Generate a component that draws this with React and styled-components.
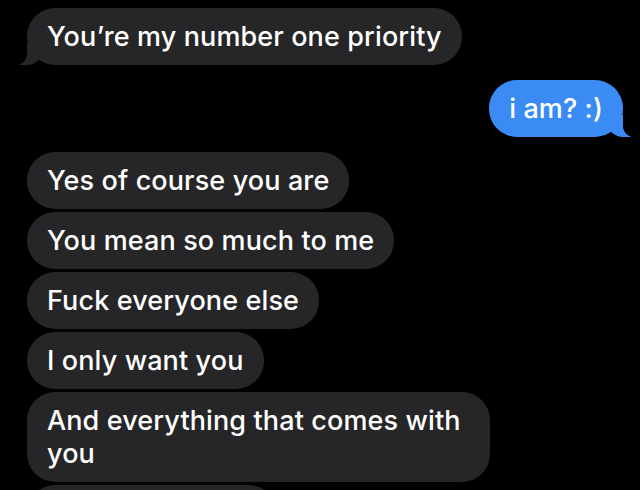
// iMessage-style conversation thread, dark mode
import React from 'react';
import styled, { createGlobalStyle } from 'styled-components';

const GlobalStyle = createGlobalStyle`
	html, body {
		margin: 0;
		padding: 0;
		background: #000000;
		overflow: hidden;
	}
	body {
		font-family: Inter, "Noto Sans", "Liberation Sans", sans-serif;
		-webkit-font-smoothing: antialiased;
	}
`;

// the whole thread
const Thread = styled.div`
	width: 640px;
	height: 490px;
	box-sizing: border-box;
	padding: 8px 17px 0 27px;
	display: flex;
	flex-direction: column;
	overflow: hidden;
`;

// a run of messages from the same sender
const Group = styled.div`
	display: flex;
	flex-direction: column;
	align-items: ${({ $mine }) => ($mine ? 'flex-end' : 'flex-start')};
	gap: 3px;
	margin-bottom: 15px;
`;

const bubbleColor = ({ $mine }) => ($mine ? '#3a8cf4' : '#262628');

// a single message bubble, with an optional tail at the bottom corner
const Bubble = styled.div`
	position: relative;
	max-width: 423px;
	padding: 12px 20px;
	border-radius: 28px;
	background: ${bubbleColor};
	color: #ffffff;
	font-size: 27px;
	line-height: 33px;
	letter-spacing: 0.12px;
	font-weight: 500;

	${({ $tail, $mine }) =>
		$tail &&
		`
		&::before {
			content: '';
			position: absolute;
			bottom: 0;
			${$mine ? 'right: -8px;' : 'left: -8px;'}
			width: 24px;
			height: 22px;
			background: ${$mine ? '#3a8cf4' : '#262628'};
			${$mine ? 'border-bottom-left-radius: 16px;' : 'border-bottom-right-radius: 16px;'}
		}
		&::after {
			content: '';
			position: absolute;
			bottom: 0;
			${$mine ? 'right: -12px;' : 'left: -12px;'}
			width: 12px;
			height: 24px;
			background: #000000;
			${$mine ? 'border-bottom-left-radius: 11px;' : 'border-bottom-right-radius: 11px;'}
		}
	`}
`;

const messages = [
	{ mine: false, lines: ["You\u2019re my number one priority"] },
	{ mine: true, lines: ['i am? :)'] },
	{
		mine: false,
		lines: [
			'Yes of course you are',
			'You mean so much to me',
			'Fuck everyone else',
			'I only want you',
			'And everything that comes with you',
			'You\u2019re my world',
		],
	},
];

const App = () => {
	return (
		<>
			<GlobalStyle />
			<Thread>
				{messages.map((group, gi) => (
					<Group key={gi} $mine={group.mine}>
						{group.lines.map((text, i) => (
							<Bubble
								key={i}
								$mine={group.mine}
								$tail={i === group.lines.length - 1}
							>
								{text}
							</Bubble>
						))}
					</Group>
				))}
			</Thread>
		</>
	);
};

export default App;
